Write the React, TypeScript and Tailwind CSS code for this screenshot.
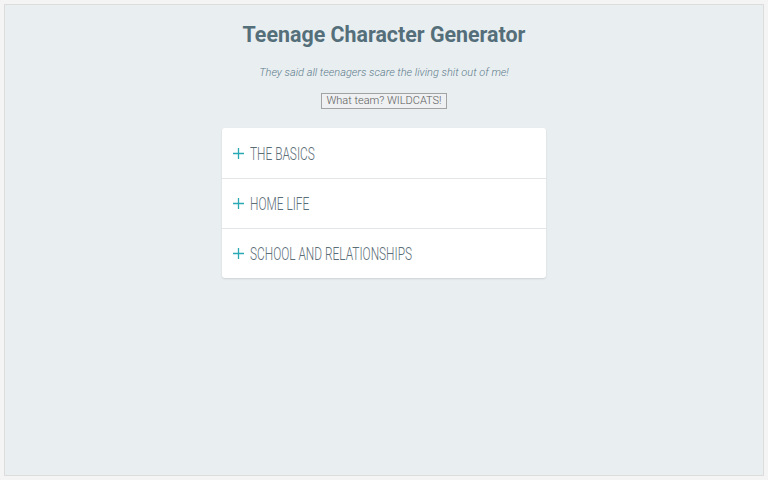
import { useState } from "react";

const sections = ["THE BASICS", "HOME LIFE", "SCHOOL AND RELATIONSHIPS"];

export default function App() {
  const [open, setOpen] = useState<number | null>(null);

  return (
    <div className="h-[480px] w-[768px] bg-[#f4f4f4] p-1 font-['Roboto',sans-serif]">
      <div className="flex h-[472px] flex-col items-center border border-[#dcdcdc] bg-[#e9eef1]">
        <h1 className="mt-[16px] text-[21.4px] font-bold leading-[28px] text-[#546e7a]">
          Teenage Character Generator
        </h1>
        <p className="mt-[17px] text-[11px] font-light italic leading-[14px] text-[#607d8b]">
          They said all teenagers scare the living shit out of me!
        </p>
        <button className="mt-[13px] border border-[#a3a3a3] bg-[#eef0f1] px-[4px] text-[11px] font-light leading-[14px] text-[#5a5a5a]">
          What team? WILDCATS!
        </button>
        <div className="mt-[19px] w-[324px] rounded-[3px] bg-white shadow-[0_1px_2px_rgba(0,0,0,0.12)]">
          {sections.map((s, i) => (
            <div
              key={s}
              onClick={() => setOpen(open === i ? null : i)}
              className={`flex h-[50px] cursor-pointer items-center px-[11px] ${i > 0 ? "border-t border-[#e2e6e8]" : ""}`}
            >
              <svg width="11" height="11" viewBox="0 0 11 11" className="mr-[6px]">
                <path d="M5.5 0v11M0 5.5h11" stroke="#2aa9b5" strokeWidth="1.3" />
              </svg>
              <span className="inline-block origin-left scale-x-[0.66] whitespace-nowrap text-[18px] font-light text-[#5b6d77]">
                {s}
              </span>
            </div>
          ))}
        </div>
      </div>
    </div>
  );
}
